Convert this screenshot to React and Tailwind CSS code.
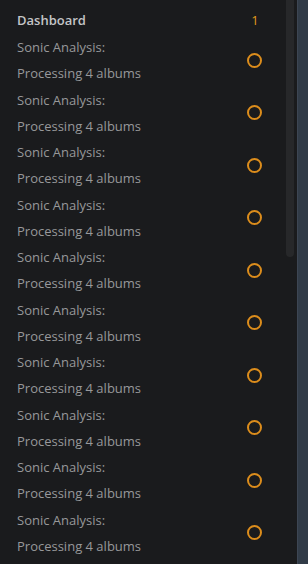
import React from 'react';

const tasks = Array.from({ length: 10 }, (_, i) => ({
  id: i,
  title: 'Sonic Analysis:',
  detail: 'Processing 4 albums',
}));

export default function App() {
  return (
    <div
      className="flex h-[564px] w-[308px] overflow-hidden bg-[#1a1b1d]"
      style={{ fontFamily: '"Open Sans", "Noto Sans", sans-serif' }}
    >
      <div className="relative w-[297px] shrink-0">
        <div className="flex h-[34px] items-center pl-[17px] pr-[35px] pt-[8px]">
          <span className="flex-1 text-[13px] font-semibold text-[#c4c5c7]">Dashboard</span>
          <span className="w-[14px] text-center text-[13px] font-medium text-[#e39a1b]">1</span>
        </div>
        <div className="flex flex-col">
          {tasks.map((t) => (
            <div key={t.id} className="flex h-[52.5px] items-center pl-[17px] pr-[35px]">
              <div className="flex-1 text-[13px] leading-[26px] text-[#97989a]">
                <div>{t.title}</div>
                <div>{t.detail}</div>
              </div>
              <div className="h-[15px] w-[15px] rounded-full border-2 border-[#dc8d1c]" />
            </div>
          ))}
        </div>
        {/* scrollbar thumb */}
        <div className="absolute right-[3px] top-0 h-[257px] w-[8px] rounded-b-[4px] bg-[#27282a]" />
      </div>
      <div className="w-[11px] shrink-0 border-l border-[#3d4653] bg-[#313b47]" />
    </div>
  );
}
